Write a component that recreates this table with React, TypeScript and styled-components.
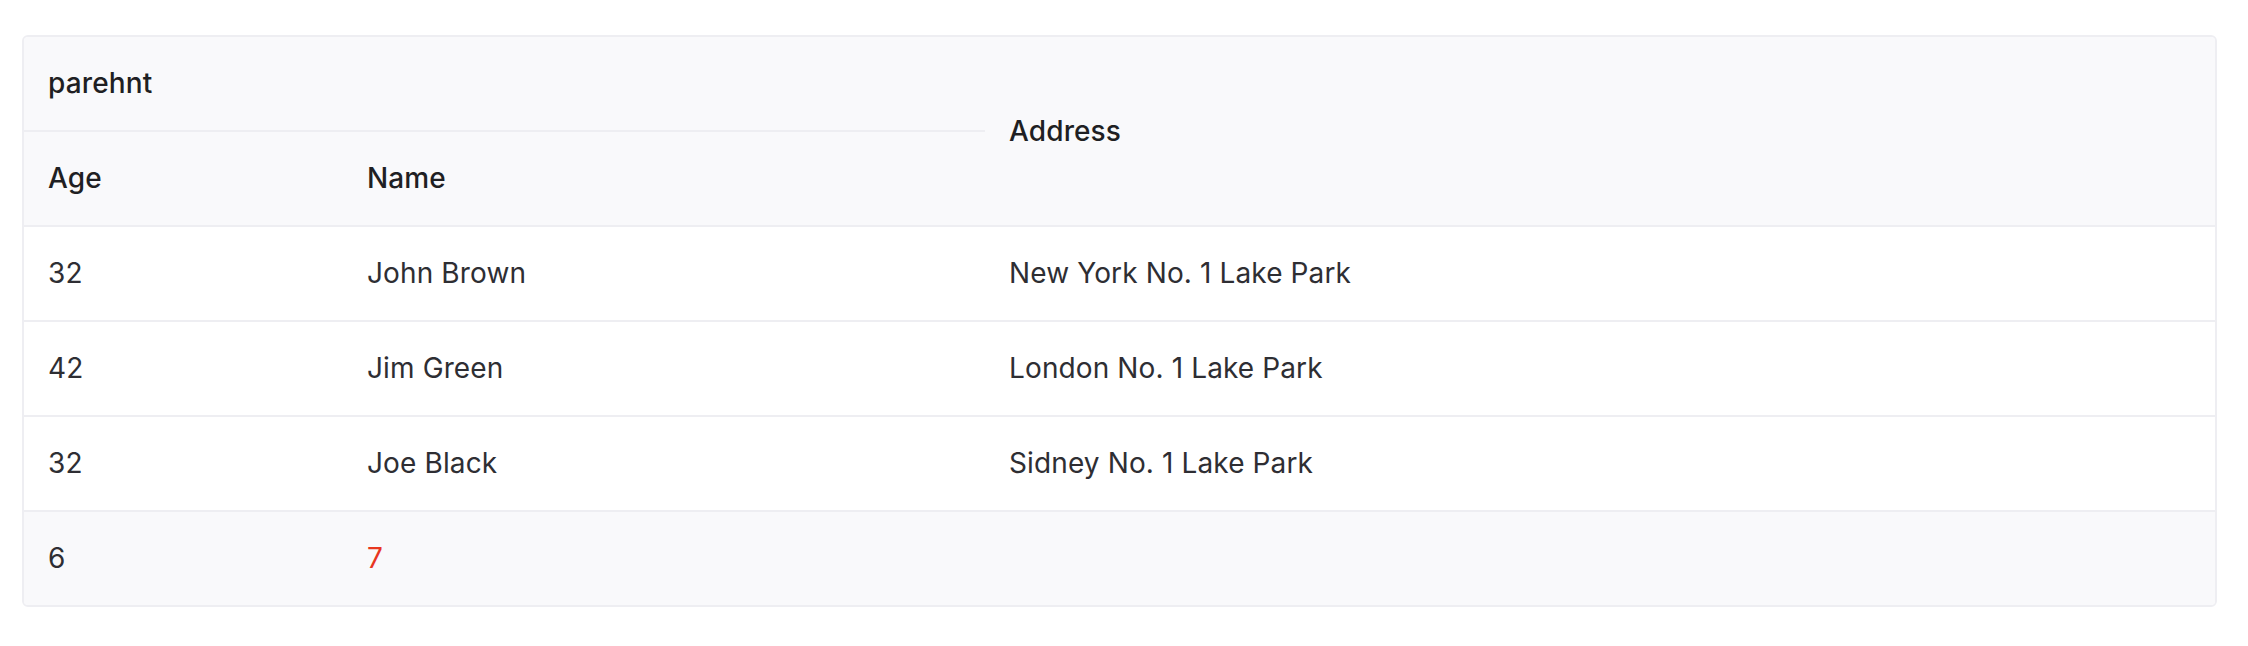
import React from "react";
import styled, { createGlobalStyle } from "styled-components";

const Global = createGlobalStyle`
  html, body { margin: 0; padding: 0; background: #ffffff; }
  body { font-family: Inter, "Noto Sans", sans-serif; }
`;

const Page = styled.div`
  padding: 35px 31px 40px 22px;
`;

const Frame = styled.div`
  border: 2px solid #eeeef2;
  border-radius: 6px;
  overflow: hidden;
`;

const Table = styled.table`
  width: 100%;
  border-collapse: separate;
  border-spacing: 0;
  table-layout: fixed;
  font-size: 28px;
  line-height: 45px;
  letter-spacing: 0.12px;
`;

const Col = styled.col<{ $w: number }>`
  width: ${(p) => p.$w}px;
`;

const Th = styled.th`
  background: #f9f9fb;
  color: #1f1f23;
  font-weight: 500;
  text-align: left;
  vertical-align: middle;
  padding: 24px 24px;
  border-bottom: 2px solid #eeeef2;
  white-space: nowrap;
`;

const Td = styled.td<{ $foot?: boolean; $bare?: boolean }>`
  background: ${(p) => (p.$foot ? "#f9f9fb" : "#ffffff")};
  color: #2e2e33;
  font-weight: 400;
  padding: 24px 24px;
  border-bottom: ${(p) => (p.$bare ? "none" : "2px solid #eeeef2")};
  white-space: nowrap;
`;

const Red = styled.span`
  color: #e8371f;
`;

const rows = [
  { age: "32", name: "John Brown", address: "New York No. 1 Lake Park" },
  { age: "42", name: "Jim Green", address: "London No. 1 Lake Park" },
  { age: "32", name: "Joe Black", address: "Sidney No. 1 Lake Park" },
];

export default function App() {
  return (
    <>
      <Global />
      <Page>
        <Frame>
          <Table>
            <colgroup>
              <Col $w={319} />
              <Col $w={642} />
              <Col $w={1230} />
            </colgroup>
            <thead>
              <tr>
                <Th colSpan={2}>parehnt</Th>
                <Th rowSpan={2}>Address</Th>
              </tr>
              <tr>
                <Th>Age</Th>
                <Th>Name</Th>
              </tr>
            </thead>
            <tbody>
              {rows.map((r, i) => (
                <tr key={i}>
                  <Td>{r.age}</Td>
                  <Td>{r.name}</Td>
                  <Td>{r.address}</Td>
                </tr>
              ))}
              <tr>
                <Td $foot $bare>6</Td>
                <Td $foot $bare>
                  <Red>7</Red>
                </Td>
                <Td $foot $bare></Td>
              </tr>
            </tbody>
          </Table>
        </Frame>
      </Page>
    </>
  );
}
